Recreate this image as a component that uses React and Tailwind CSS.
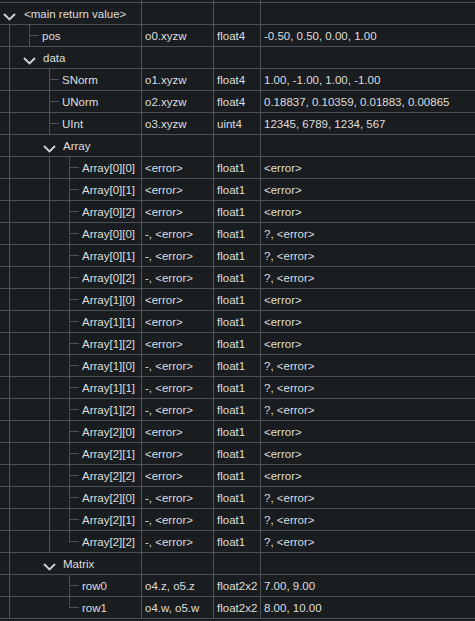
import React from 'react';

const LINE = '#4d5155';

// one 20px indent box of the tree column
function Branch({ kind }) {
  if (kind === 'C') {
    return (
      <div className="flex-none w-[20px] h-full flex items-center">
        <svg width="20" height="21" viewBox="0 0 20 21">
          <path d="M4 11 L9.5 16.5 L15 11" fill="none" stroke="#d2d2d2" strokeWidth="1.9" />
        </svg>
      </div>
    );
  }
  return (
    <div className="flex-none w-[20px] h-full">
      <svg width="20" height="21" viewBox="0 0 20 21">
        {kind === 'V' && <line x1="9.5" y1="0" x2="9.5" y2="21" stroke={LINE} strokeWidth="1" />}
        {kind === 'T' && (
          <>
            <line x1="9.5" y1="0" x2="9.5" y2="21" stroke={LINE} strokeWidth="1" />
            <line x1="9.5" y1="10.5" x2="19" y2="10.5" stroke={LINE} strokeWidth="1" />
          </>
        )}
        {kind === 'L' && (
          <>
            <line x1="9.5" y1="0" x2="9.5" y2="11" stroke={LINE} strokeWidth="1" />
            <line x1="9.5" y1="10.5" x2="19" y2="10.5" stroke={LINE} strokeWidth="1" />
          </>
        )}
      </svg>
    </div>
  );
}

const arrayRows = [
  ['Array[0][0]', '<error>', '<error>'],
  ['Array[0][1]', '<error>', '<error>'],
  ['Array[0][2]', '<error>', '<error>'],
  ['Array[0][0]', '-, <error>', '?, <error>'],
  ['Array[0][1]', '-, <error>', '?, <error>'],
  ['Array[0][2]', '-, <error>', '?, <error>'],
  ['Array[1][0]', '<error>', '<error>'],
  ['Array[1][1]', '<error>', '<error>'],
  ['Array[1][2]', '<error>', '<error>'],
  ['Array[1][0]', '-, <error>', '?, <error>'],
  ['Array[1][1]', '-, <error>', '?, <error>'],
  ['Array[1][2]', '-, <error>', '?, <error>'],
  ['Array[2][0]', '<error>', '<error>'],
  ['Array[2][1]', '<error>', '<error>'],
  ['Array[2][2]', '<error>', '<error>'],
  ['Array[2][0]', '-, <error>', '?, <error>'],
  ['Array[2][1]', '-, <error>', '?, <error>'],
  ['Array[2][2]', '-, <error>', '?, <error>'],
];

const rows = [
  { tree: ['C'], name: '<main return value>', reg: '', type: '', value: '' },
  { tree: ['V', 'T'], name: 'pos', reg: 'o0.xyzw', type: 'float4', value: '-0.50, 0.50, 0.00, 1.00' },
  { tree: ['V', 'C'], name: 'data', reg: '', type: '', value: '' },
  { tree: ['V', 'E', 'T'], name: 'SNorm', reg: 'o1.xyzw', type: 'float4', value: '1.00, -1.00, 1.00, -1.00' },
  { tree: ['V', 'E', 'T'], name: 'UNorm', reg: 'o2.xyzw', type: 'float4', value: '0.18837, 0.10359, 0.01883, 0.00865' },
  { tree: ['V', 'E', 'T'], name: 'UInt', reg: 'o3.xyzw', type: 'uint4', value: '12345, 6789, 1234, 567' },
  { tree: ['V', 'E', 'C'], name: 'Array', reg: '', type: '', value: '' },
  ...arrayRows.map(([name, reg, value], i) => ({
    tree: ['V', 'E', 'V', i === arrayRows.length - 1 ? 'L' : 'T'],
    name,
    reg,
    type: 'float1',
    value,
  })),
  { tree: ['V', 'E', 'C'], name: 'Matrix', reg: '', type: '', value: '' },
  { tree: ['V', 'E', 'E', 'T'], name: 'row0', reg: 'o4.z, o5.z', type: 'float2x2', value: '7.00, 9.00' },
  { tree: ['V', 'E', 'E', 'L'], name: 'row1', reg: 'o4.w, o5.w', type: 'float2x2', value: '8.00, 10.00' },
];

export default function App() {
  return (
    <div
      className="w-[475px] h-[621px] overflow-hidden bg-[#1a1d20] text-[#dedede] text-[11.5px] leading-[21px]"
      style={{ fontFamily: '"Liberation Sans", Arial, sans-serif' }}
    >
      {/* partially scrolled-off row */}
      <div className="flex h-[3px] border-b border-[#4d5155]">
        <div className="w-[142px] border-r border-[#4d5155]" />
        <div className="w-[72px] border-r border-[#4d5155]" />
        <div className="w-[47px] border-r border-[#4d5155]" />
        <div className="flex-1" />
      </div>

      {rows.map((r, i) => {
        const isParent = r.tree[r.tree.length - 1] === 'C';
        return (
          <div key={i} className="flex h-[22px] border-b border-[#4d5155]">
            <div className="w-[142px] flex-none flex h-full border-r border-[#4d5155] overflow-hidden whitespace-nowrap">
              {r.tree.map((k, j) => (
                <Branch key={j} kind={k} />
              ))}
              <span className={isParent ? (i === 0 ? 'pl-[4px] pt-[1px]' : 'pl-[3px] pt-[1px]') : 'pl-[2px] pt-[1px]'}>
                {r.name}
              </span>
            </div>
            <div className="w-[72px] flex-none border-r border-[#4d5155] pl-[3px] pt-[1px] whitespace-nowrap overflow-hidden">
              {r.reg}
            </div>
            <div className="w-[47px] flex-none border-r border-[#4d5155] pl-[3px] pt-[1px] whitespace-nowrap overflow-hidden">
              {r.type}
            </div>
            <div className="flex-1 pl-[3px] pt-[1px] whitespace-nowrap overflow-hidden">{r.value}</div>
          </div>
        );
      })}
    </div>
  );
}
